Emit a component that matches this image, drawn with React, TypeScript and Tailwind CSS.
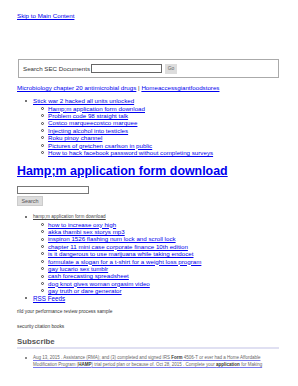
import React from 'react';

const topNested = [
  'Hamp;m application form download',
  'Problem code 98 straight talk',
  'Costco marqueecostco marquee',
  'Injecting alcohol into testicles',
  'Roku pinoy channel',
  'Pictures of gretchen csarlson in public',
  'How to hack facebook password without completing surveys',
];

const lowerNested = [
  'how to increase oxy high',
  'akka thambi sex storys mp3',
  'inspiron 1526 flashing num lock and scroll lock',
  'chapter 11 mini case corporate finance 10th edition',
  'is it dangerous to use marijuana while taking endocet',
  'formulate a slogan for a t-shirt for a weight loss program',
  'gay lucario sex tumblr',
  'cash forecasting spreadsheet',
  'dog knot gives woman orgasim video',
  'gay truth or dare generator',
];

const Disc: React.FC = () => (
  <span className="w-[16px] shrink-0 flex justify-end pr-[6px]">
    <span className="w-[2px] h-[2px] rounded-full bg-[#444]" />
  </span>
);

const Circle: React.FC = () => (
  <span className="w-[15px] shrink-0 flex justify-end pr-[4px]">
    <span className="w-[3px] h-[3px] rounded-full border-[0.8px] border-[#444]" />
  </span>
);

const App: React.FC = () => {
  return (
    <div className="w-[298px] h-[386px] overflow-hidden bg-white font-['Liberation_Sans',Arial,sans-serif] pl-[17px] pt-[12px] text-[#333]">
      <a href="#" className="block text-[6.2px] leading-[8px] text-[#0000ee] underline">
        Skip to Main Content
      </a>

      {/* search box */}
      <div className="mt-[39px] ml-[1px] w-[261px] h-[19px] border border-[#aaa] flex items-center pl-[4px]">
        <span className="text-[6.2px] text-[#333]">Search SEC Documents</span>
        <span className="ml-[1px] w-[71px] h-[9px] border border-[#666] bg-white" />
        <span className="ml-[3px] w-[12px] h-[10px] bg-[#ddd] flex items-center justify-center text-[5px] text-[#666]">
          Go
        </span>
      </div>

      <div className="mt-[6px] text-[6.2px] leading-[8px] whitespace-nowrap">
        <a href="#" className="text-[#0000ee] underline">Microbiology chapter 20 antimicrobial drugs</a>
        <span className="text-[#333]"> | </span>
        <a href="#" className="text-[#0000ee] underline">Homeaccessgiantfoodstores</a>
      </div>

      <ul className="mt-[5.3px] text-[6.2px] leading-[7.4px] whitespace-nowrap">
        <li className="flex items-center h-[7.4px]">
          <Disc />
          <a href="#" className="text-[#0000ee] underline">Stick war 2 hacked all units unlocked</a>
        </li>
        {topNested.map((t) => (
          <li key={t} className="flex items-center h-[7.4px] pl-[16px]">
            <Circle />
            <a href="#" className="text-[#0000ee] underline">{t}</a>
          </li>
        ))}
      </ul>

      <h1 className="mt-[7.5px] text-[12.4px] leading-[14px] font-bold whitespace-nowrap">
        <a href="#" className="text-[#0000ee] underline">Hamp;m application form download</a>
      </h1>

      <div className="mt-[8px] w-[72px] h-[8px] border border-[#777] bg-white" />
      <div className="mt-[2px] w-[26px] h-[10px] bg-[#ddd] border border-[#ccc] flex items-center justify-center text-[5.4px] text-[#555]">
        Search
      </div>

      <ul className="mt-[7.3px] leading-[7.4px] whitespace-nowrap">
        <li className="flex items-center h-[7.4px] text-[4.7px]">
          <Disc />
          <a href="#" className="text-[#444] underline">hamp;m application form download</a>
        </li>
        {lowerNested.map((t) => (
          <li key={t} className="flex items-center h-[7.4px] pl-[16px] text-[6.2px]">
            <Circle />
            <a href="#" className="text-[#0000ee] underline">{t}</a>
          </li>
        ))}
        <li className="flex items-center h-[7.4px] text-[6.3px]">
          <Disc />
          <a href="#" className="text-[#0000ee] underline">RSS Feeds</a>
        </li>
      </ul>

      <p className="mt-[6.5px] text-[4.8px] leading-[7px] text-[#333]">rild your performance review process sample</p>
      <p className="mt-[8px] text-[4.8px] leading-[7px] text-[#333]">security citation books</p>

      <h3 className="mt-[7px] text-[7.8px] leading-[9px] font-bold text-[#555]">Subscribe</h3>
      <div className="mt-[0.5px] w-[262px] h-[2px] bg-[#e0e0f2]" />

      <ul className="mt-[5.5px] text-[4.5px] leading-[7px] whitespace-nowrap">
        <li className="flex">
          <span className="w-[16px] shrink-0 flex justify-end pr-[6px] h-[7px] items-center">
            <span className="w-[2px] h-[2px] rounded-full bg-[#666]" />
          </span>
          <a href="#" className="text-[#666] underline decoration-[#7777ee]">
            Aug 13, 2015 . Assistance (RMA); and (3) completed and signed IRS <b className="text-[#333]">Form</b> 4506-T or ever had a Home Affordable
            <br />
            Modification Program (<b className="text-[#333]">HAMP</b>) trial period plan or because of. Oct 28, 2015 . Complete your <b className="text-[#333]">application</b> for Making
          </a>
        </li>
      </ul>
    </div>
  );
};

export default App;
